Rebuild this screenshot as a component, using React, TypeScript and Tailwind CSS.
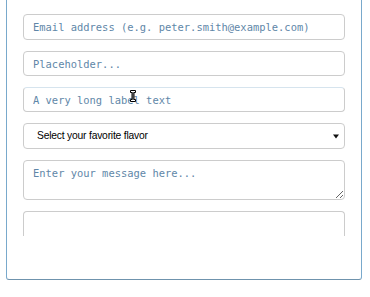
import React from 'react';

const fieldBase =
  'w-full rounded-[4px] border border-[#cccccc] bg-white px-[9px] text-[10.45px] outline-none placeholder:text-[#5f87a8]';
const mono = { fontFamily: '"DejaVu Sans Mono", monospace' };

const App: React.FC = () => {
  return (
    <div className="h-[297px] w-[370px] bg-white pl-[6px]">
      <div className="relative h-[280px] w-[356px] rounded-b-[3px] border-x border-b border-x-[#79a9cc] border-b-[#6f93ad] px-4 pt-[14px]">
        <div className="flex flex-col gap-[11px]">
          <input
            readOnly
            className={`${fieldBase} block h-[26px]`}
            style={mono}
            placeholder="Email address (e.g. peter.smith@example.com)"
          />
          <input
            readOnly
            className={`${fieldBase} block h-[25px]`}
            style={mono}
            placeholder="Placeholder..."
          />
          <input
            readOnly
            className={`${fieldBase} block h-[25px] border-t-[#d6e4ee]`}
            style={mono}
            placeholder="A very long label text"
          />
          <div
            role="combobox"
            className="flex h-[26px] w-full items-center justify-between rounded-[4px] border border-[#cccccc] bg-white pl-[13px] pr-[5px] text-[10.3px] tracking-[-0.2px] text-black"
            style={{ fontFamily: '"Liberation Sans", Arial, sans-serif' }}
          >
            <span>Select your favorite flavor</span>
            <svg width="6" height="5" viewBox="0 0 6 5">
              <path d="M0 0.5 H6 L3 4.5 Z" fill="#111" />
            </svg>
          </div>
          <textarea
            readOnly
            className={`${fieldBase} block h-[40px] resize-y pt-[5px] leading-[14px]`}
            style={mono}
            placeholder="Enter your message here..."
          />
          <div className="h-[25px] w-full rounded-t-[4px] border-x border-t border-[#cccccc]" />
        </div>

        {/* text cursor */}
        <svg
          className="pointer-events-none absolute left-[123px] top-[90px]"
          width="6"
          height="12"
          viewBox="0 0 6 12"
        >
          <path
            d="M0.5 0.5 H5.5 V2.5 H4 V9.5 H5.5 V11.5 H0.5 V9.5 H2 V2.5 H0.5 Z"
            fill="#fff"
            stroke="#000"
            strokeWidth="1"
          />
          <rect x="2.5" y="2" width="1" height="8" fill="#000" />
        </svg>
      </div>
    </div>
  );
};

export default App;
